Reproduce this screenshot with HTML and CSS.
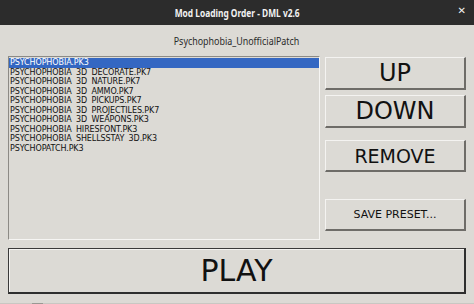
FILE: index.html
```html
<!DOCTYPE html>
<html lang="en">
<head>
    <meta charset="UTF-8">
    <title>Mod Loading Order - DML v2.6</title>
    <link rel="stylesheet" href="styles.css">
</head>
<body>
    <div class="titlebar">
        <span class="title">Mod Loading Order - DML v2.6</span>
        <span class="close">&#x2715;</span>
    </div>

    <div class="window">
        <div class="preset-name"><span>Psychophobia_UnofficialPatch</span></div>

        <div class="main-row">
            <!-- load order list -->
            <ul class="mod-list">
                <li class="selected">PSYCHOPHOBIA.PK3</li>
                <li>PSYCHOPHOBIA 3D DECORATE.PK7</li>
                <li>PSYCHOPHOBIA 3D NATURE.PK7</li>
                <li>PSYCHOPHOBIA 3D AMMO.PK7</li>
                <li>PSYCHOPHOBIA 3D PICKUPS.PK7</li>
                <li>PSYCHOPHOBIA 3D PROJECTILES.PK7</li>
                <li>PSYCHOPHOBIA 3D WEAPONS.PK3</li>
                <li>PSYCHOPHOBIA HIRESFONT.PK3</li>
                <li>PSYCHOPHOBIA SHELLSSTAY 3D.PK3</li>
                <li>PSYCHOPATCH.PK3</li>
            </ul>

            <div class="side-buttons">
                <button class="btn btn-up">UP</button>
                <button class="btn btn-down">DOWN</button>
                <button class="btn btn-remove">REMOVE</button>
                <button class="btn btn-save">SAVE PRESET...</button>
            </div>
        </div>

        <button class="btn btn-play">PLAY</button>
    </div>
    <div class="statusbar"><span class="grip"></span></div>
</body>
</html>
```

FILE: styles.css
```css
body {
    margin: 0;
    width: 474px;
    height: 304px;
    overflow: hidden;
    background-color: #dcdad5;
    font-family: "DejaVu Sans", sans-serif;
    color: #1a1a1a;
}
.titlebar {
    height: 25px;
    background-color: #2c2c2c;
    color: #f2f2f2;
    display: flex;
    align-items: center;
    justify-content: center;
    position: relative;
}
.title {
    font-family: "Noto Sans", sans-serif;
    font-weight: bold;
    font-size: 11px;
    transform: scaleX(0.76); /* window manager font is narrower */
}
.close {
    position: absolute; /* sits over the bar */
    right: 8px;
    top: 5px;
    font-size: 10px;
    font-weight: bold;
}
.window {
    padding: 0 8px;
}
.preset-name {
    height: 31px;
    display: flex;
    align-items: center;
    justify-content: center;
    font-family: "Noto Sans", sans-serif;
    font-size: 11px;
    color: #2a2a2a;
}
.preset-name span {
    transform: scaleX(0.81);
}
.main-row {
    display: flex;
    gap: 5px;
    height: 184px;
}
.mod-list {
    list-style: none;
    margin: 0;
    padding: 1px 0 0 0;
    width: 312px;
    box-sizing: border-box;
    border: 1px solid;
    border-color: #8c8a85 #f6f5f3 #f6f5f3 #8c8a85;
    font-size: 8px;
    line-height: 9.55px;
    color: #111;
    letter-spacing: -0.1px;
    word-spacing: 2px;
}
.mod-list li {
    padding-left: 1px;
    white-space: nowrap;
}
.mod-list li.selected {
    background-color: #3467c2;
    color: #ffffff;
}
.side-buttons {
    width: 141px;
    display: flex;
    flex-direction: column;
    padding-top: 1px;
}
.btn {
    font-family: "DejaVu Sans", sans-serif;
    background-color: #dcdad5;
    color: #111;
    border: 1px solid;
    border-color: #f4f3f1 #6e6c68 #6e6c68 #f4f3f1;
    border-width: 1px 2px 2px 1px;
    padding: 0;
    cursor: pointer;
}
.btn-up {
    height: 33px;
    font-size: 24px;
}
.btn-down {
    height: 33px;
    font-size: 24px;
    margin-top: 5px;
}
.btn-remove {
    height: 32px;
    font-size: 19px;
    margin-top: 12px;
}
.btn-save {
    height: 32px;
    font-size: 11px;
    margin-top: 27px;
}
.btn-play {
    display: block;
    width: 458px;
    height: 46px;
    margin-top: 8px;
    font-size: 30px;
    border-color: #3a3a3a #2e2e2e #2e2e2e #3a3a3a;
    box-shadow: inset 1px 1px 0 #f4f3f1;
}
.statusbar {
    margin-top: 9px;
    height: 2px;
    background-color: #c9c7c2;
}
.grip {
    display: block;
    margin-left: 32px;
    width: 11px;
    height: 2px;
    background-color: #9a9893;
}
```
